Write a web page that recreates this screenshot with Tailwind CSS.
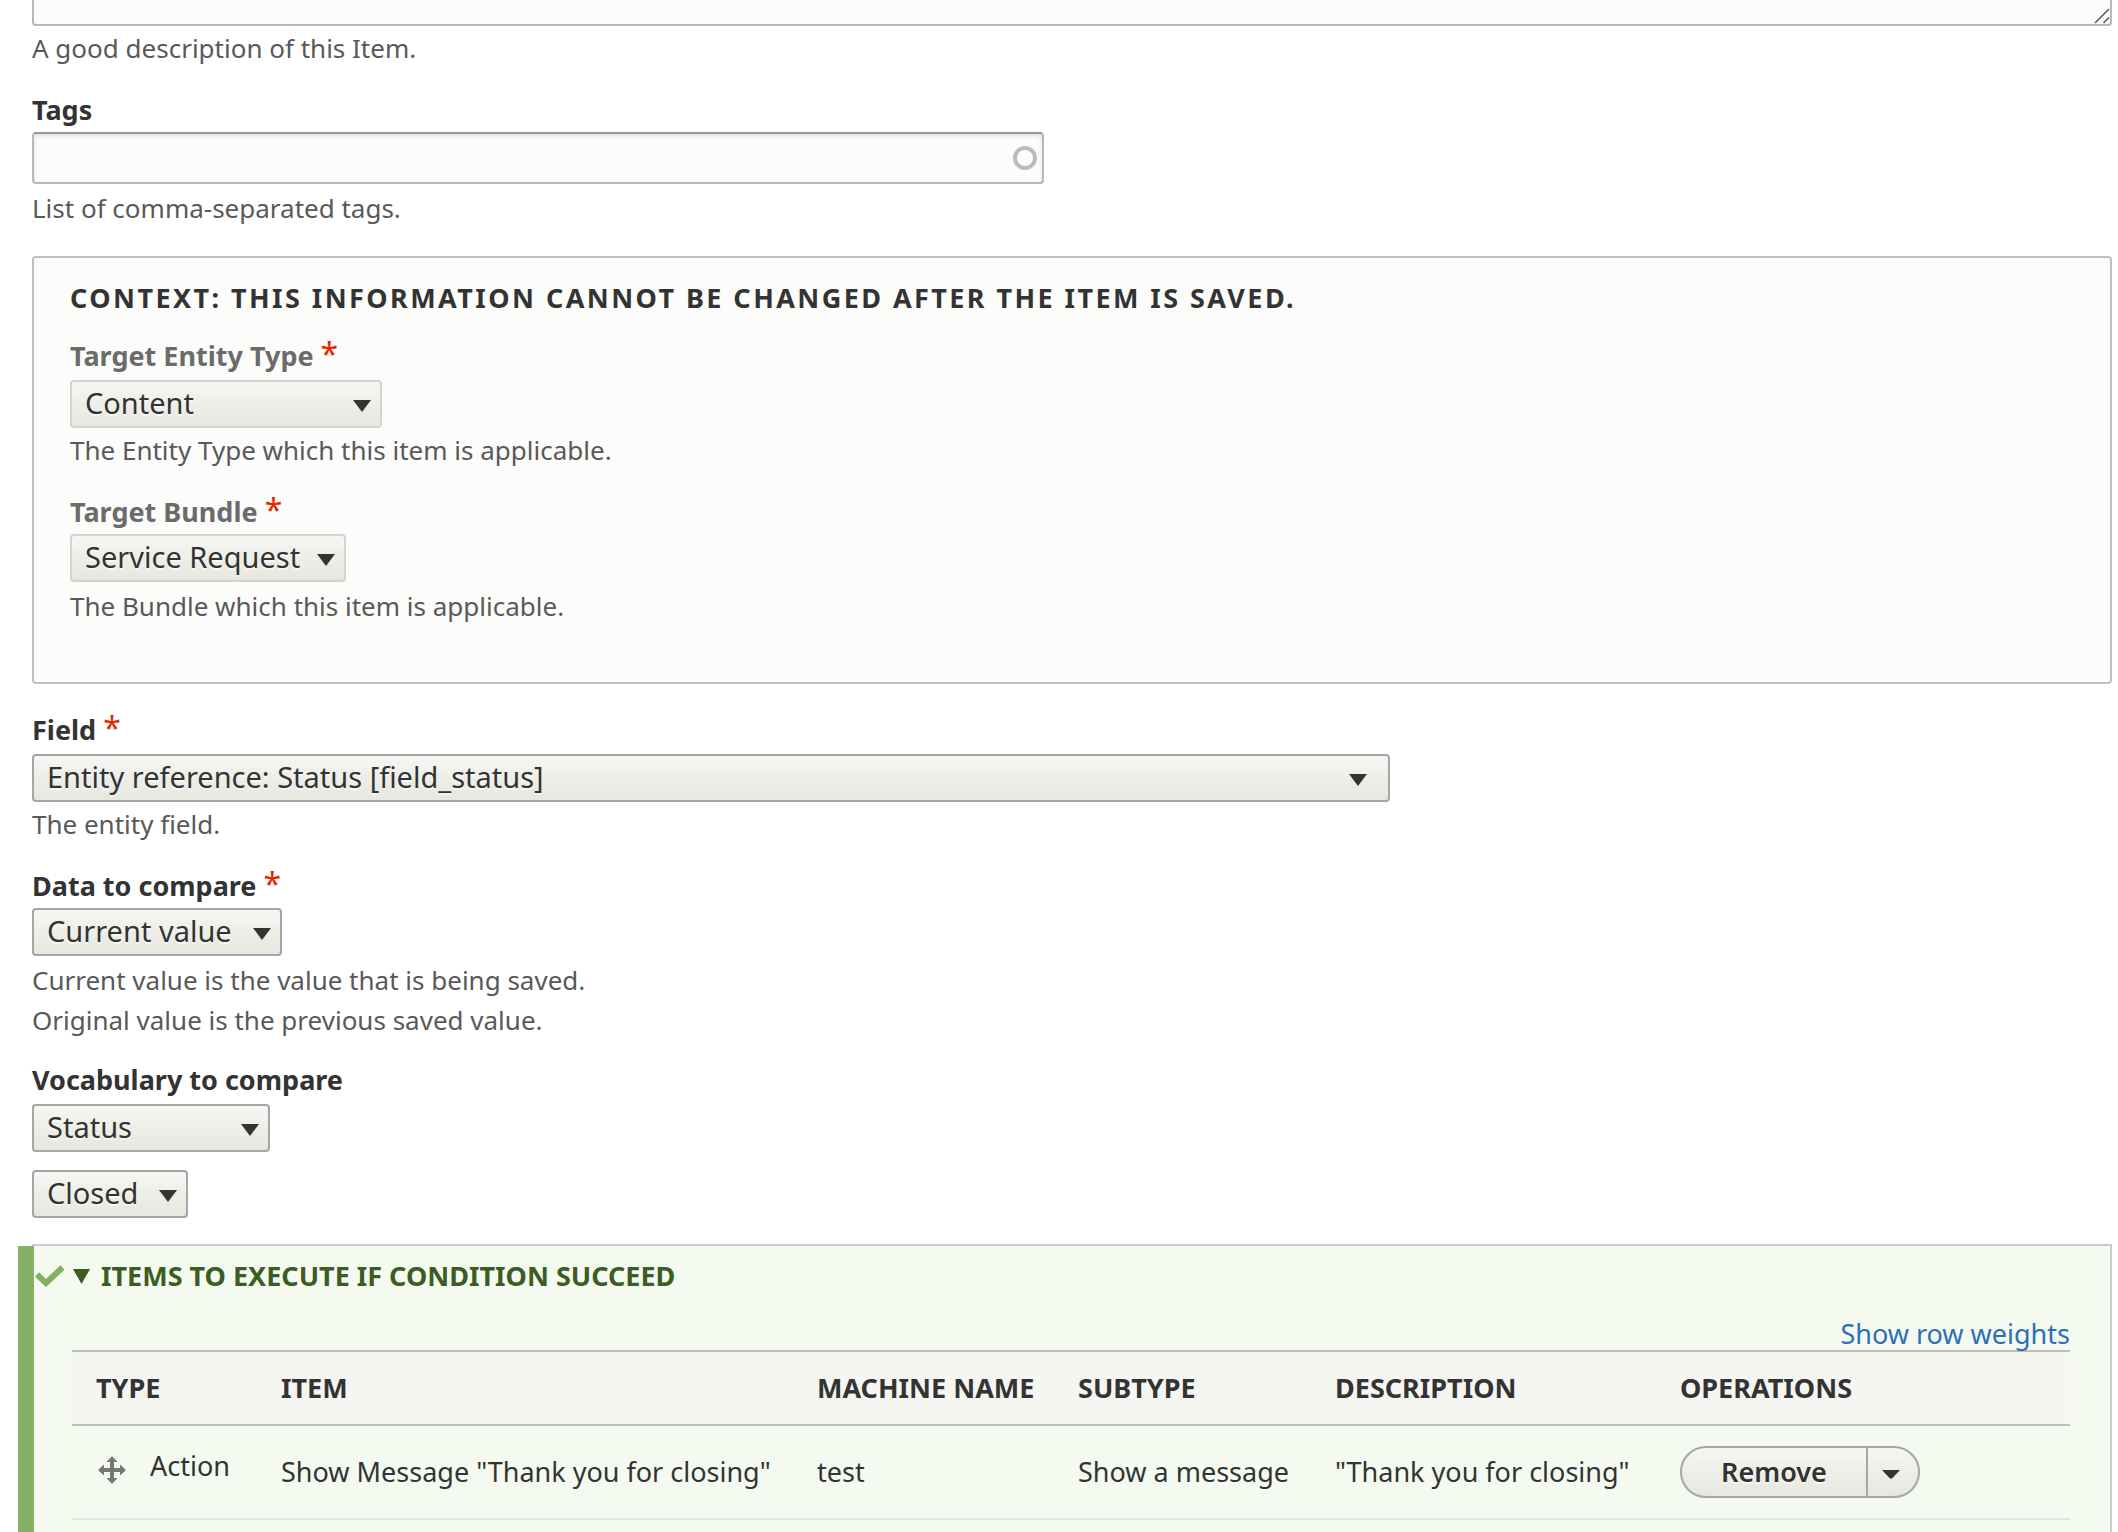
<!DOCTYPE html>
<html lang="en">
<head>
  <meta charset="UTF-8" />
  <meta name="viewport" content="width=device-width, initial-scale=1.0" />
  <title>Edit condition</title>
  <script src="https://cdn.jsdelivr.net/npm/@tailwindcss/browser@4"></script>
</head>
<body class="bg-white text-[#333] font-['Noto_Sans',sans-serif] overflow-x-hidden">
  <form class="pl-8 pr-[6px]">
    <!-- Description -->
    <div class="mb-[22px]">
      <div class="relative">
        <textarea id="description" aria-label="Description" class="block w-full h-[26px] resize-none border-2 border-t-0 border-[#b8b8b8] rounded-b bg-[#fcfcfa]"></textarea>
        <svg class="absolute right-[2px] bottom-[2px] w-4 h-4" viewBox="0 0 16 16" fill="none" stroke="#555" stroke-width="1.5">
          <path d="M1 15 15 1M9.500 15 15 9.500" />
        </svg>
      </div>
      <p class="mt-0.5 text-[26px] leading-10 text-[#595959]">A good description of this Item.</p>
    </div>

    <!-- Tags -->
    <div class="mb-7">
      <label for="tags" class="block mb-0.5 text-[27px] leading-10 font-bold">Tags</label>
      <div class="relative w-[1012px] max-w-full">
        <input type="text" id="tags" class="block w-full h-[52px] px-3 text-[29px] border-2 border-[#b8b8b8] border-t-[#999996] rounded bg-[#fcfcfa] shadow-[inset_0_2px_4px_rgba(0,0,0,0.12)]" />
        <span class="absolute right-[7px] top-[14px] size-6 rounded-full border-4 border-[#bbb]"></span>
      </div>
      <p class="mt-1 text-[26px] leading-10 text-[#595959]">List of comma-separated tags.</p>
    </div>

    <!-- Context -->
    <section class="mb-[26px] px-9 pt-5 pb-14 border-2 border-[#bfbfbf] rounded bg-[#fcfcfa]">
      <h2 class="mb-[18px] text-[27px] leading-10 font-bold uppercase tracking-[0.09em]">Context: This information cannot be changed after the item is saved.</h2>

      <div class="mb-[22px]">
        <label for="entity-type" class="block mb-1 text-[27px] leading-10 font-bold text-[#6b6b6b]">Target Entity Type <span class="text-[32px] leading-none text-[#e62600] font-normal">*</span></label>
        <div class="relative w-[312px]">
          <select id="entity-type" class="block w-full h-12 pl-[13px] pr-10 pb-0.5 appearance-none text-[29px] leading-10 text-[#333] border-2 border-[#d3d3d1] rounded bg-linear-to-b from-[#f6f6f3] to-[#e7e7df] text-shadow-[0_2px_0_rgba(255,255,255,0.6)]">
            <option>Content</option>
          </select>
          <svg class="absolute right-[11px] top-5 w-[18px] h-3 pointer-events-none" viewBox="0 0 18 12" fill="#333"><path d="M0 0h18L9 12z" /></svg>
        </div>
        <p class="mt-0.5 text-[26px] leading-10 text-[#595959]">The Entity Type which this item is applicable.</p>
      </div>

      <div>
        <label for="bundle" class="block mb-0.5 text-[27px] leading-10 font-bold text-[#6b6b6b]">Target Bundle <span class="text-[32px] leading-none text-[#e62600] font-normal">*</span></label>
        <div class="relative w-[276px]">
          <select id="bundle" class="block w-full h-12 pl-[13px] pr-10 pb-0.5 appearance-none text-[29px] leading-10 text-[#333] border-2 border-[#d3d3d1] rounded bg-linear-to-b from-[#f6f6f3] to-[#e7e7df] text-shadow-[0_2px_0_rgba(255,255,255,0.6)]">
            <option>Service Request</option>
          </select>
          <svg class="absolute right-[11px] top-5 w-[18px] h-3 pointer-events-none" viewBox="0 0 18 12" fill="#333"><path d="M0 0h18L9 12z" /></svg>
        </div>
        <p class="mt-1 text-[26px] leading-10 text-[#595959]">The Bundle which this item is applicable.</p>
      </div>
    </section>

    <!-- Field -->
    <div class="mb-[22px]">
      <label for="field" class="block mb-1 text-[27px] leading-10 font-bold">Field <span class="text-[32px] leading-none text-[#e62600] font-normal">*</span></label>
      <div class="relative w-[1358px] max-w-full">
        <select id="field" class="block w-full h-12 pl-[13px] pr-10 pb-0.5 appearance-none text-[29px] leading-10 text-[#333] border-2 border-[#a6a6a6] rounded bg-linear-to-b from-[#f6f6f3] to-[#e7e7df] text-shadow-[0_2px_0_rgba(255,255,255,0.6)]">
          <option>Entity reference: Status [field_status]</option>
        </select>
        <svg class="absolute right-[23px] top-5 w-[18px] h-3 pointer-events-none" viewBox="0 0 18 12" fill="#333"><path d="M0 0h18L9 12z" /></svg>
      </div>
      <p class="mt-0.5 text-[26px] leading-10 text-[#595959]">The entity field.</p>
    </div>

    <!-- Data to compare -->
    <div class="mb-5">
      <label for="data" class="block mb-0.5 text-[27px] leading-10 font-bold">Data to compare <span class="text-[32px] leading-none text-[#e62600] font-normal">*</span></label>
      <div class="relative w-[250px]">
        <select id="data" class="block w-full h-12 pl-[13px] pr-10 pb-0.5 appearance-none text-[29px] leading-10 text-[#333] border-2 border-[#a6a6a6] rounded bg-linear-to-b from-[#f6f6f3] to-[#e7e7df] text-shadow-[0_2px_0_rgba(255,255,255,0.6)]">
          <option>Current value</option>
        </select>
        <svg class="absolute right-[11px] top-5 w-[18px] h-3 pointer-events-none" viewBox="0 0 18 12" fill="#333"><path d="M0 0h18L9 12z" /></svg>
      </div>
      <p class="mt-1 text-[26px] leading-10 text-[#595959]">Current value is the value that is being saved.<br />Original value is the previous saved value.</p>
    </div>

    <!-- Vocabulary -->
    <div class="mb-[26px]">
      <label for="vocabulary" class="block mb-1 text-[27px] leading-10 font-bold">Vocabulary to compare</label>
      <div class="relative w-[238px] mb-[18px]">
        <select id="vocabulary" class="block w-full h-12 pl-[13px] pr-10 pb-0.5 appearance-none text-[29px] leading-10 text-[#333] border-2 border-[#a6a6a6] rounded bg-linear-to-b from-[#f6f6f3] to-[#e7e7df] text-shadow-[0_2px_0_rgba(255,255,255,0.6)]">
          <option>Status</option>
        </select>
        <svg class="absolute right-[11px] top-5 w-[18px] h-3 pointer-events-none" viewBox="0 0 18 12" fill="#333"><path d="M0 0h18L9 12z" /></svg>
      </div>
      <div class="relative w-[156px]">
        <select id="term" aria-label="Term" class="block w-full h-12 pl-[13px] pr-10 pb-0.5 appearance-none text-[29px] leading-10 text-[#333] border-2 border-[#a6a6a6] rounded bg-linear-to-b from-[#f6f6f3] to-[#e7e7df] text-shadow-[0_2px_0_rgba(255,255,255,0.6)]">
          <option>Closed</option>
        </select>
        <svg class="absolute right-[11px] top-5 w-[18px] h-3 pointer-events-none" viewBox="0 0 18 12" fill="#333"><path d="M0 0h18L9 12z" /></svg>
      </div>
    </div>

    <!-- Items to execute -->
    <section class="relative border-2 border-b-0 border-[#ccc] bg-[#f4faf0] pb-3">
      <div class="absolute -left-4 top-0 bottom-0 w-4 bg-[#84b164]"></div>
      <h2 class="flex items-center pt-[10px] pl-px text-[27px] leading-10 font-bold text-[#3b5c22] uppercase">
        <svg class="w-[30px] h-[22px] mr-2" viewBox="0 0 30 22" fill="none" stroke="#80b261" stroke-width="6"><path d="M2 9.500 11 18 27.500 2.500" /></svg>
        <svg class="w-[17px] h-[15px] mr-[11px]" viewBox="0 0 17 15" fill="#3b5c22"><path d="M0 0h17L8.500 15z" /></svg>
        Items to execute if condition succeed
      </h2>
      <div class="pl-[38px] pr-10">
        <div class="pt-[22px] flex justify-end">
          <a href="#" class="text-[27px] leading-8 text-[#2e6fb7]">Show row weights</a>
        </div>
        <table class="w-full table-fixed border-collapse text-[27px] leading-10">
          <thead>
            <tr class="h-[74px] border-y-2 border-[#bfbfba] bg-[#f5f5f2] text-left uppercase">
              <th class="w-[185px] pl-6">Type</th>
              <th class="w-[536px] pl-6">Item</th>
              <th class="w-[261px] pl-6">Machine name</th>
              <th class="w-[257px] pl-6">Subtype</th>
              <th class="w-[345px] pl-6">Description</th>
              <th class="pl-6">Operations</th>
            </tr>
          </thead>
          <tbody>
            <tr class="h-[94px] border-b-2 border-[#e2e4de] whitespace-nowrap">
              <td class="pl-[26px]">
                <div class="flex items-center pb-1">
                  <svg class="size-7 mr-6" viewBox="0 0 28 28" fill="#777"><path d="M14 0l5.500 6H16v6h6V8.500l6 5.500-6 5.500V16h-6v6h3.500L14 28l-5.500-6H12v-6H6v3.500L0 14l6-5.500V12h6V6H8.500z" /></svg>
                  <span class="pb-2">Action</span>
                </div>
              </td>
              <td class="pl-6">Show Message "Thank you for closing"</td>
              <td class="pl-6">test</td>
              <td class="pl-6">Show a message</td>
              <td class="pl-6">"Thank you for closing"</td>
              <td class="pl-6">
                <div class="flex w-[240px] h-[52px] border-2 border-[#a6a6a6] rounded-full bg-linear-to-b from-[#f6f6f3] to-[#e7e7df] overflow-hidden">
                  <button type="button" class="flex-1 text-[27px] font-semibold text-shadow-[0_2px_0_rgba(255,255,255,0.6)]">Remove</button>
                  <button type="button" aria-label="More operations" class="w-[52px] pr-1 pt-1 border-l-2 border-[#a6a6a6] flex items-center justify-center">
                    <svg class="w-[18px] h-[9px]" viewBox="0 0 18 9" fill="#333"><path d="M0 0h18L10 8.500H8z" /></svg>
                  </button>
                </div>
              </td>
            </tr>
          </tbody>
        </table>
      </div>
    </section>
  </form>
</body>
</html>
